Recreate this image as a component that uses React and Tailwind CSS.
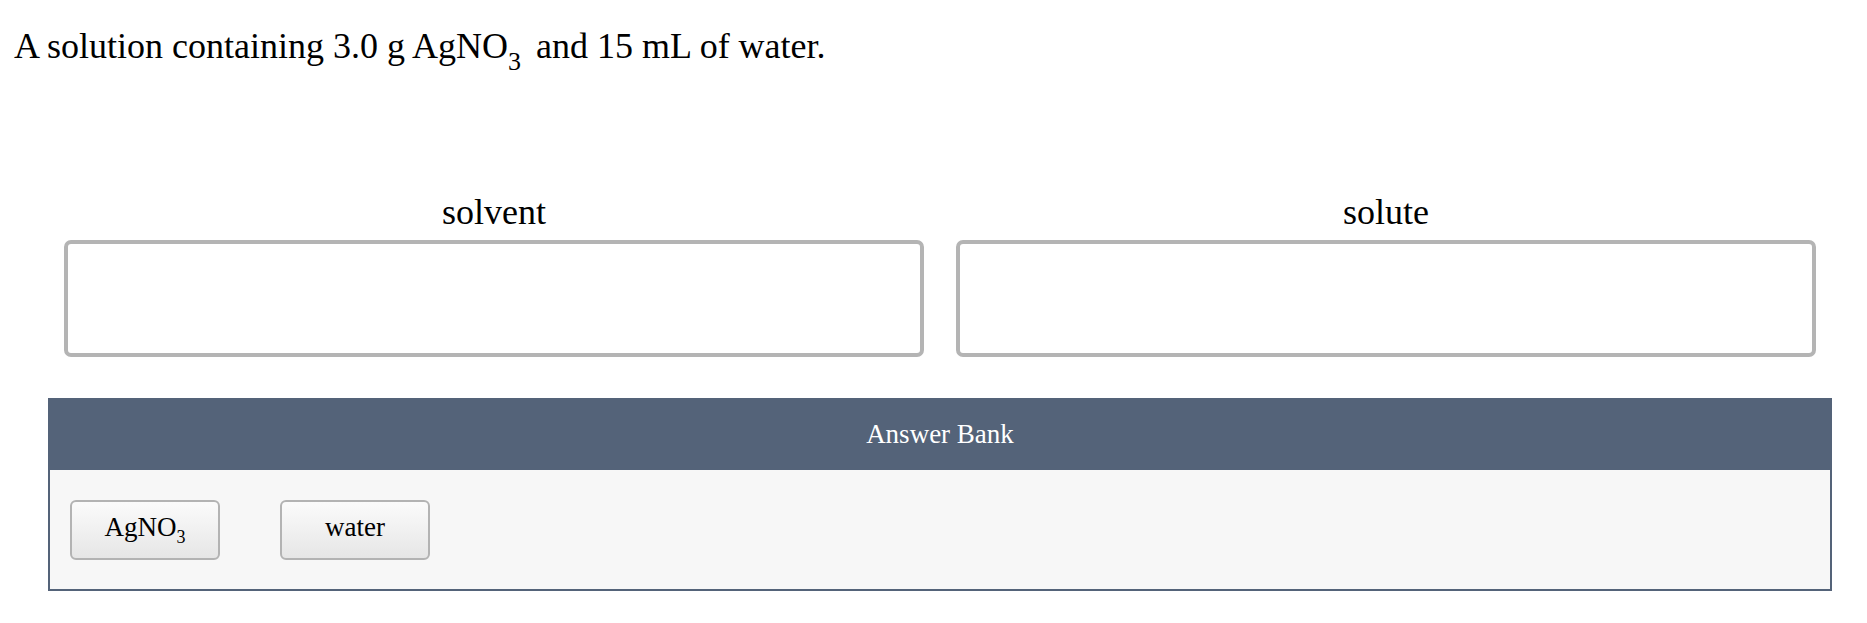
import React from "react";

function Sub({ children, cls }) {
  return <span className={cls}>{children}</span>;
}

function DropBox({ label }) {
  return (
    <div className="flex flex-col">
      <div className="text-center text-[36px] leading-[40px] text-black mb-[8px]">{label}</div>
      <div className="h-[117px] border-4 border-[#b4b4b4] rounded-[7px] bg-white" />
    </div>
  );
}

function Chip({ children }) {
  return (
    <div className="w-[150px] h-[60px] pb-[5px] flex items-center justify-center border-2 border-[#b3b3b3] rounded-[6px] bg-linear-to-b from-[#fbfbfb] to-[#e6e6e6] text-[27px] leading-none text-black">
      {children}
    </div>
  );
}

export default function App() {
  return (
    <div className="min-h-[623px] w-full bg-white text-black" style={{ fontFamily: '"Liberation Serif", "Times New Roman", serif' }}>
      <div className="pt-[26px] pl-[14px] text-[36px] leading-[40px]">
        A solution containing 3.0 g AgNO
        <Sub cls="relative top-[12px] text-[26px] leading-none mr-[6px]">3</Sub> and 15 mL of water.
      </div>

      <div className="ml-[48px] w-[1784px] mt-[126px]">
        <div className="px-[16px] grid grid-cols-2 gap-[32px]">
          <DropBox label="solvent" />
          <DropBox label="solute" />
        </div>

        <div className="mt-[41px]">
          <div className="h-[72px] bg-[#546379] flex items-center justify-center text-white text-[27px] leading-none">
            Answer Bank
          </div>
          <div className="border-2 border-t-0 border-[#546379] bg-[#f7f7f7] pt-[30px] pb-[29px] pl-[20px] flex gap-[60px]">
            <Chip>
              <span>
                AgNO<Sub cls="relative top-[7px] text-[18px] leading-none">3</Sub>
              </span>
            </Chip>
            <Chip>water</Chip>
          </div>
        </div>
      </div>
    </div>
  );
}
